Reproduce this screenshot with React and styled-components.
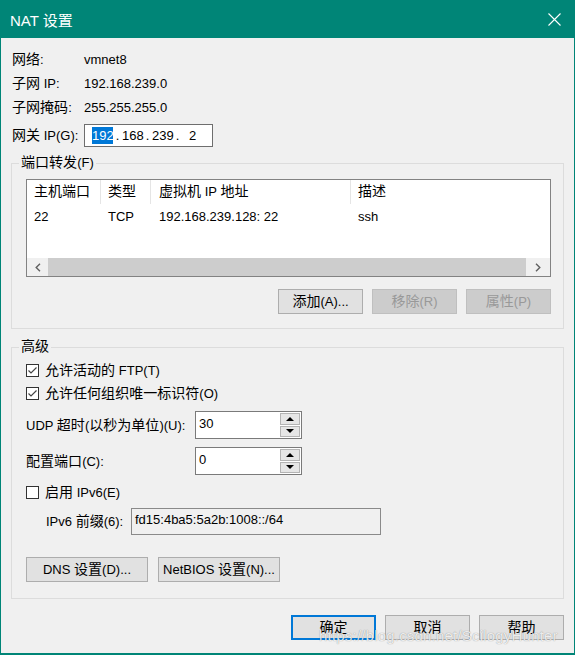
import * as React from "react";
import styled, { createGlobalStyle } from "styled-components";

const TEAL = "#008577";

const GlobalStyle = createGlobalStyle`
  html, body {
    margin: 0;
    padding: 0;
    background: #ffffff;
  }
  body {
    font-family: "Liberation Sans", "Noto Sans CJK SC", sans-serif;
    font-size: 13px;
    color: #000;
  }
`;

// windows draws the ideographs a bit larger than the latin text,
// line-height 0 keeps them from pushing the rows apart
const Han = styled.span`
  font-family: "Noto Sans CJK SC", sans-serif;
  font-size: 1.08em;
  line-height: 0;
`;

const HAN_RUN = /([\u4e00-\u9fff]+)/;

const Txt = ({ children }) =>
  String(children)
    .split(HAN_RUN)
    .map((part, i) =>
      HAN_RUN.test(part) ? <Han key={i}>{part}</Han> : part
    );

const Window = styled.div`
  position: relative;
  box-sizing: border-box;
  width: 575px;
  height: 655px;
  border: 1px solid ${TEAL};
  border-bottom-width: 2px;
  background: #f0f0f0;
  display: flex;
  flex-direction: column;
  overflow: hidden;
`;

const TitleBar = styled.div`
  height: 37px;
  flex: none;
  background: ${TEAL};
  color: #fff;
  display: flex;
  align-items: center;
  justify-content: space-between;
  padding: 0 13px 0 9px;
  font-size: 15px;
`;

const Body = styled.div`
  padding: 9px 10px 0 10px;
  display: flex;
  flex-direction: column;
`;

const InfoRow = styled.div`
  display: flex;
  align-items: center;
  height: 24px;
  padding-left: 1px;
`;

const Label = styled.span`
  width: ${({ width }) => width}px;
  flex: none;
  white-space: nowrap;
`;

const GatewayRow = styled(InfoRow)`
  height: 23px;
  margin-top: 5px;
`;

const IpField = styled.div`
  box-sizing: border-box;
  width: 129px;
  height: 23px;
  border: 1px solid #6e6e6e;
  background: #fff;
  display: flex;
  align-items: center;
  padding-left: 7px;
`;

const Octet = styled.span`
  width: 21px;
  text-align: center;
  line-height: 17px;
  background: ${({ selected }) => (selected ? "#0078d7" : "transparent")};
  color: ${({ selected }) => (selected ? "#fff" : "#000")};
`;

const Dot = styled.span`
  width: 9px;
  text-align: center;
`;

const Group = styled.fieldset`
  margin: ${({ gap }) => gap}px 0 0;
  border: 1px solid #dcdcdc;
  padding: ${({ pad }) => pad};
  min-width: 0;
`;

const Legend = styled.legend`
  padding: 0 2px;
  margin-left: -7px;
  line-height: 16px;
`;

const ListBox = styled.div`
  box-sizing: border-box;
  height: 98px;
  border: 1px solid #828282;
  background: #fff;
  display: flex;
  flex-direction: column;
`;

const GridRow = styled.div`
  display: grid;
  grid-template-columns: 74px 50px 200px 1fr;
  height: 24px;
  align-items: center;
`;

const HeadCell = styled.div`
  height: 24px;
  line-height: 24px;
  padding-left: ${({ pl }) => pl || 7}px;
  border-right: ${({ last }) => (last ? "none" : "1px solid #e5e5e5")};
  white-space: nowrap;
`;

const Cell = styled.div`
  padding-left: ${({ pl }) => pl || 7}px;
  white-space: nowrap;
`;

const Filler = styled.div`
  flex: 1;
`;

const HScroll = styled.div`
  height: 18px;
  display: flex;
  background: #f0f0f0;
`;

const ScrollArrow = styled.div`
  width: ${({ w }) => w}px;
  display: flex;
  align-items: center;
  justify-content: center;
`;

const Thumb = styled.div`
  flex: 1;
  background: #cdcdcd;
`;

const ButtonRow = styled.div`
  display: flex;
  justify-content: ${({ start }) => (start ? "flex-start" : "flex-end")};
  gap: ${({ gap }) => gap}px;
  margin-top: ${({ top }) => top}px;
`;

const Button = styled.button`
  box-sizing: border-box;
  width: ${({ width }) => width || 85}px;
  height: 25px;
  padding: 0;
  font: inherit;
  line-height: 16px;
  color: ${({ disabled }) => (disabled ? "#999999" : "#000")};
  background: ${({ disabled }) => (disabled ? "#cccccc" : "#e1e1e1")};
  border: ${({ primary, disabled }) =>
    primary
      ? "2px solid #0078d7"
      : `1px solid ${disabled ? "#bfbfbf" : "#adadad"}`};
`;

const CheckRow = styled.div`
  display: flex;
  align-items: center;
  gap: 6px;
  height: 23px;
  margin-top: ${({ top }) => top || 0}px;
`;

const Box = styled.span`
  box-sizing: border-box;
  width: 13px;
  height: 13px;
  border: 1px solid #333;
  background: #fff;
  display: flex;
  align-items: center;
  justify-content: center;
`;

const SpinRow = styled.div`
  display: flex;
  align-items: center;
  margin-top: ${({ top }) => top}px;
`;

const Spin = styled.div`
  box-sizing: border-box;
  width: 107px;
  height: 28px;
  border: 1px solid #7a7a7a;
  background: #fff;
  display: flex;
`;

const SpinText = styled.div`
  flex: 1;
  padding: 4px 0 0 3px;
  line-height: 16px;
`;

const SpinButtons = styled.div`
  width: 20px;
  display: flex;
  flex-direction: column;
  gap: 1px;
  padding: 1px 1px 1px 0;
`;

const SpinButton = styled.div`
  flex: 1;
  box-sizing: border-box;
  border: 1px solid #b4b4b4;
  background: #e6e6e6;
  display: flex;
  align-items: center;
  justify-content: center;
`;

const Triangle = styled.span`
  width: 0;
  height: 0;
  border-left: 4px solid transparent;
  border-right: 4px solid transparent;
  ${({ down }) =>
    down ? "border-top: 4px solid #000;" : "border-bottom: 4px solid #000;"}
`;

const PrefixRow = styled.div`
  display: flex;
  align-items: center;
  padding-left: 20px;
  margin-top: 4px;
`;

const ReadOnlyField = styled.div`
  box-sizing: border-box;
  width: 250px;
  height: 27px;
  border: 1px solid #8a8a8a;
  background: #f0f0f0;
  padding: 3px 0 0 3px;
  line-height: 16px;
`;

const Watermark = styled.div`
  position: absolute;
  left: 318px;
  top: 626px;
  font-size: 15px;
  letter-spacing: 0.2px;
  color: rgba(255, 255, 255, 0.85);
  text-shadow: 0 0 1px rgba(0, 0, 0, 0.45);
  pointer-events: none;
  white-space: nowrap;
`;

const CloseIcon = () => (
  <svg width="13" height="13" viewBox="0 0 13 13">
    <path d="M0.5 0.5 L12.5 12.5 M12.5 0.5 L0.5 12.5" stroke="#fff" strokeWidth="1.1" />
  </svg>
);

const Chevron = ({ right }) => (
  <svg width="6" height="9" viewBox="0 0 6 9">
    <polyline
      points={right ? "1,0.8 4.8,4.5 1,8.2" : "5,0.8 1.2,4.5 5,8.2"}
      fill="none"
      stroke="#606060"
      strokeWidth="1.4"
    />
  </svg>
);

const Check = ({ checked, children, top }) => (
  <CheckRow top={top}>
    <Box>
      {checked && (
        <svg width="11" height="11" viewBox="0 0 11 11">
          <polyline points="1.5,5.5 4,8 9.5,2.5" fill="none" stroke="#444" strokeWidth="1.2" />
        </svg>
      )}
    </Box>
    <span>
      <Txt>{children}</Txt>
    </span>
  </CheckRow>
);

const SpinBox = ({ value }) => (
  <Spin>
    <SpinText>{value}</SpinText>
    <SpinButtons>
      <SpinButton>
        <Triangle />
      </SpinButton>
      <SpinButton>
        <Triangle down />
      </SpinButton>
    </SpinButtons>
  </Spin>
);

const info = [
  ["网络:", "vmnet8"],
  ["子网 IP:", "192.168.239.0"],
  ["子网掩码:", "255.255.255.0"]
];

const columns = [
  ["主机端口", 7],
  ["类型", 7],
  ["虚拟机 IP 地址", 8],
  ["描述", 7]
];

const rows = [["22", "TCP", "192.168.239.128: 22", "ssh"]];

const App = () => (
  <>
    <GlobalStyle />
    <Window>
      <TitleBar>
        <span>NAT 设置</span>
        <CloseIcon />
      </TitleBar>
      <Body>
        {info.map(([label, value]) => (
          <InfoRow key={label}>
            <Label width={72}>
              <Txt>{label}</Txt>
            </Label>
            <span>{value}</span>
          </InfoRow>
        ))}
        <GatewayRow>
          <Label width={72}>
            <Txt>网关 IP(G):</Txt>
          </Label>
          <IpField>
            <Octet selected>192</Octet>
            <Dot>.</Dot>
            <Octet>168</Octet>
            <Dot>.</Dot>
            <Octet>239</Octet>
            <Dot>.</Dot>
            <Octet>2</Octet>
          </IpField>
        </GatewayRow>

        <Group gap={8} pad="8px 12px 14px 14px">
          <Legend>
            <Txt>端口转发(F)</Txt>
          </Legend>
          <ListBox>
            <GridRow>
              {columns.map(([name, pl], i) => (
                <HeadCell key={name} pl={pl} last={i === columns.length - 1}>
                  <Txt>{name}</Txt>
                </HeadCell>
              ))}
            </GridRow>
            {rows.map(row => (
              <GridRow key={row[0]}>
                {row.map((value, i) => (
                  <Cell key={i} pl={columns[i][1]}>
                    {value}
                  </Cell>
                ))}
              </GridRow>
            ))}
            <Filler />
            <HScroll>
              <ScrollArrow w={21}>
                <Chevron />
              </ScrollArrow>
              <Thumb />
              <ScrollArrow w={24}>
                <Chevron right />
              </ScrollArrow>
            </HScroll>
          </ListBox>
          <ButtonRow gap={9} top={12}>
            <Button>
              <Txt>添加(A)...</Txt>
            </Button>
            <Button disabled>
              <Txt>移除(R)</Txt>
            </Button>
            <Button disabled>
              <Txt>属性(P)</Txt>
            </Button>
          </ButtonRow>
        </Group>

        <Group gap={10} pad="4px 12px 16px 14px">
          <Legend>
            <Txt>高级</Txt>
          </Legend>
          <Check checked>允许活动的 FTP(T)</Check>
          <Check checked>允许任何组织唯一标识符(O)</Check>
          <SpinRow top={6}>
            <Label width={169}>
              <Txt>UDP 超时(以秒为单位)(U):</Txt>
            </Label>
            <SpinBox value="30" />
          </SpinRow>
          <SpinRow top={8}>
            <Label width={169}>
              <Txt>配置端口(C):</Txt>
            </Label>
            <SpinBox value="0" />
          </SpinRow>
          <Check top={6}>启用 IPv6(E)</Check>
          <PrefixRow>
            <Label width={85}>
              <Txt>IPv6 前缀(6):</Txt>
            </Label>
            <ReadOnlyField>fd15:4ba5:5a2b:1008::/64</ReadOnlyField>
          </PrefixRow>
          <ButtonRow start gap={10} top={22}>
            <Button width={122}>
              <Txt>DNS 设置(D)...</Txt>
            </Button>
            <Button width={122}>
              <Txt>NetBIOS 设置(N)...</Txt>
            </Button>
          </ButtonRow>
        </Group>

        <ButtonRow gap={9} top={16}>
          <Button primary>
            <Txt>确定</Txt>
          </Button>
          <Button>
            <Txt>取消</Txt>
          </Button>
          <Button>
            <Txt>帮助</Txt>
          </Button>
        </ButtonRow>
      </Body>
      <Watermark>https://blog.csdn.net/ScilogyHunter</Watermark>
    </Window>
  </>
);

export default App;
